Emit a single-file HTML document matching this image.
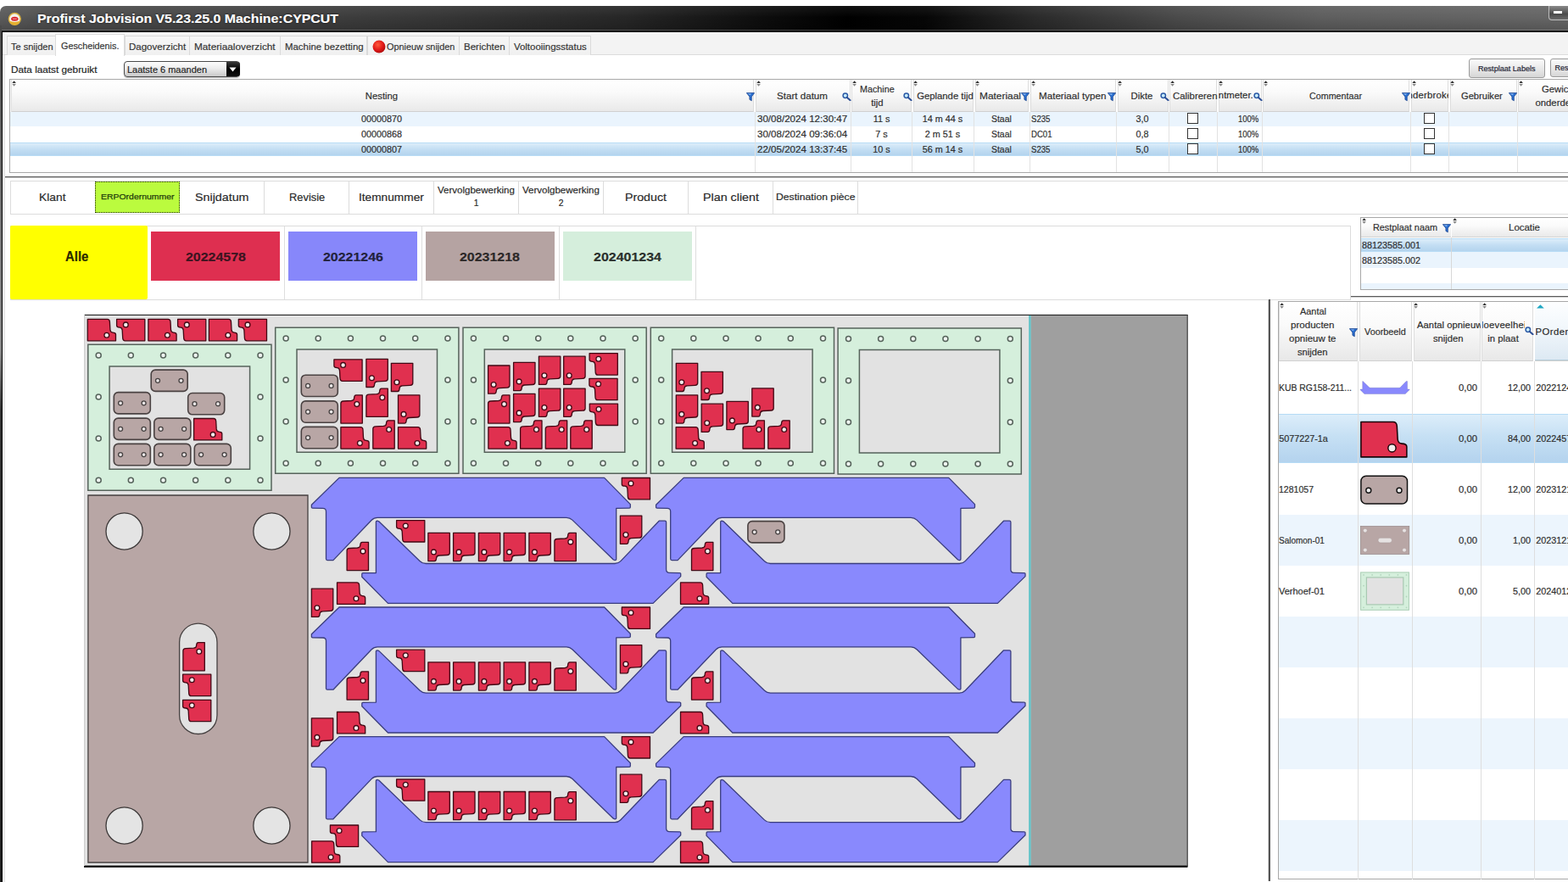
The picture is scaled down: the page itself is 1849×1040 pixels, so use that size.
<!DOCTYPE html><html><head><meta charset="utf-8"><title>Profirst Jobvision</title><style>
html,body{margin:0;padding:0}body{width:1849px;height:1040px;overflow:hidden;position:relative;background:#fff;font-family:"Liberation Sans", sans-serif;}
body>div,body>div>div{position:absolute}
.t{position:absolute;white-space:nowrap;line-height:1;color:#2a2a2a;-webkit-text-stroke:0.18px currentColor}
</style></head><body>
<svg id="nest" width="1849" height="1040" viewBox="0 0 1849 1040" style="position:absolute;left:0;top:0">
<defs>
<g id="rp"><path d="M0,0 L23.3,0 Q25.9,0 26.1,3 L26.6,12.4 Q26.9,15.6 29.6,15.7 Q33.2,15.8 33.2,18 L33.2,25.4 L0,25.4 Z" fill="#e0304f" stroke="#420814" stroke-width="1.3" stroke-linejoin="round"/><circle cx="22.5" cy="18.9" r="2.9" fill="#f3ecec" stroke="#420814" stroke-width="1.3"/></g>
<g id="bp"><rect x="0.5" y="0.5" width="43" height="25.3" rx="5" fill="#b8a6a5" stroke="#4a4242" stroke-width="1.6"/><circle cx="8.3" cy="13.2" r="2.5" fill="#e9e5e5" stroke="#454040" stroke-width="1.3"/><circle cx="35.8" cy="13.2" r="2.5" fill="#e9e5e5" stroke="#454040" stroke-width="1.3"/></g>
<g id="gf"><path fill-rule="evenodd" d="M0.6,0.6 H216.8 V172.7 H0.6 Z M25.9,26.3 V147.7 H191.4 V26.3 Z" fill="#d5efdc" stroke="#56635b" stroke-width="1.5"/><g fill="#eef4f0" stroke="#56635b" stroke-width="1.5"><circle cx="13.0" cy="13.3" r="3.0"/><circle cx="13.0" cy="62.4" r="3.0"/><circle cx="13.0" cy="111.5" r="3.0"/><circle cx="13.0" cy="160.6" r="3.0"/><circle cx="51.1" cy="13.3" r="3.0"/><circle cx="51.1" cy="160.6" r="3.0"/><circle cx="89.3" cy="13.3" r="3.0"/><circle cx="89.3" cy="160.6" r="3.0"/><circle cx="127.4" cy="13.3" r="3.0"/><circle cx="127.4" cy="160.6" r="3.0"/><circle cx="165.6" cy="13.3" r="3.0"/><circle cx="165.6" cy="160.6" r="3.0"/><circle cx="203.8" cy="13.3" r="3.0"/><circle cx="203.8" cy="62.4" r="3.0"/><circle cx="203.8" cy="111.5" r="3.0"/><circle cx="203.8" cy="160.6" r="3.0"/></g></g>
<path id="bb" d="M32.6,0 L345.2,0 L375.9,31.2 L375.9,34.6 Q375.9,35.7 374.8,35.7 L359.3,35.9 L359.3,96.2 Q359.3,97.2 357.8,97.2 L356,96.6 L307.5,49.7 Q304.6,46.9 300.6,46.9 L77.6,46.9 Q73.6,46.9 70.8,49.8 L25.5,97.2 L18.6,97.2 Q17.1,97.2 17.1,95.7 L17.1,39.8 Q17.1,36.1 13.4,36 L1.2,35.8 Q0,35.8 0,34.6 L0,31.8 Z" fill="#8989fd" stroke="#3a3d7e" stroke-width="1.3" stroke-linejoin="round"/>
</defs>
<rect x="99" y="371" width="1301.5" height="651" fill="#e2e2e2"/>
<rect x="1215.4" y="371.5" width="185.1" height="650" fill="#9f9f9f"/>
<rect x="1213.2" y="371.5" width="2.4" height="650" fill="#5cc2c8"/>
<rect x="99" y="370.9" width="1301.5" height="1.1" fill="#222"/>
<rect x="99" y="1020.6" width="1301.5" height="2.2" fill="#000"/>
<rect x="1399.6" y="371" width="1.2" height="651" fill="#444"/>
<rect x="99" y="371" width="1" height="650" fill="#cfcfcf"/>
<path fill-rule="evenodd" d="M103.9,584 H363 V1017 H103.9 Z M211.6,757.3 a22.2,22.2 0 0 1 44.4,0 V843.3 a22.2,22.2 0 0 1 -44.4,0 Z" fill="#b8a6a5" stroke="#454040" stroke-width="1.3"/>
<circle cx="146.6" cy="626.5" r="21.6" fill="#e4e4e4" stroke="#3c3838" stroke-width="1.3"/>
<circle cx="320.4" cy="626.5" r="21.6" fill="#e4e4e4" stroke="#3c3838" stroke-width="1.3"/>
<circle cx="146.6" cy="973.5" r="21.6" fill="#e4e4e4" stroke="#3c3838" stroke-width="1.3"/>
<circle cx="320.4" cy="973.5" r="21.6" fill="#e4e4e4" stroke="#3c3838" stroke-width="1.3"/>
<use href="#gf" x="103.2" y="405.6"/>
<use href="#gf" x="324.1" y="385.6"/>
<use href="#gf" x="545.4" y="385.6"/>
<use href="#gf" x="766.7" y="385.6"/>
<use href="#gf" x="987.5" y="386.3"/>
<use href="#bp" x="177.7" y="435.6"/>
<use href="#bp" x="133.8" y="462.1"/>
<use href="#bp" x="221.2" y="463"/>
<use href="#bp" x="133.8" y="492.6"/>
<use href="#bp" x="181.3" y="492.6"/>
<use href="#bp" x="133.8" y="522.9"/>
<use href="#bp" x="181.3" y="522.9"/>
<use href="#bp" x="228.8" y="522.9"/>
<use href="#bp" x="354.8" y="441.7"/>
<use href="#bp" x="354.8" y="472.4"/>
<use href="#bp" x="354.8" y="502.9"/>
<use href="#bp" x="881.4" y="614.1"/>
<use href="#bb" x="367.4" y="563.4"/>
<use href="#bb" x="773.6" y="563.4"/>
<use href="#bb" transform="translate(802.7,711.4) rotate(180)"/>
<use href="#bb" transform="translate(1209.0,711.4) rotate(180)"/>
<use href="#bb" x="367.4" y="716.0"/>
<use href="#bb" x="773.6" y="716.0"/>
<use href="#bb" transform="translate(802.7,864.0) rotate(180)"/>
<use href="#bb" transform="translate(1209.0,864.0) rotate(180)"/>
<use href="#bb" x="367.4" y="868.6"/>
<use href="#bb" x="773.6" y="868.6"/>
<use href="#bb" transform="translate(802.7,1016.6) rotate(180)"/>
<use href="#bb" transform="translate(1209.0,1016.6) rotate(180)"/>
<use href="#rp" transform="translate(103.3,376.4)"/>
<use href="#rp" transform="translate(170.8,401.8) rotate(180)"/>
<use href="#rp" transform="translate(174.9,376.4)"/>
<use href="#rp" transform="translate(242.8,401.8) rotate(180)"/>
<use href="#rp" transform="translate(246.4,376.4)"/>
<use href="#rp" transform="translate(314.5,401.8) rotate(180)"/>
<use href="#rp" transform="translate(228.6,493.5)"/>
<use href="#rp" transform="translate(427.1,449.3) rotate(180)"/>
<use href="#rp" transform="translate(457.3,423.3) rotate(90)"/>
<use href="#rp" transform="translate(486.8,428.3) rotate(90)"/>
<use href="#rp" transform="translate(401.9,499.1) rotate(-90)"/>
<use href="#rp" transform="translate(431.9,491.3) rotate(-90)"/>
<use href="#rp" transform="translate(494.9,465.9) rotate(90)"/>
<use href="#rp" transform="translate(401.9,503.7)"/>
<use href="#rp" transform="translate(439.8,529.0) rotate(-90)"/>
<use href="#rp" transform="translate(469.5,503.7)"/>
<use href="#rp" transform="translate(601.0,431.0) rotate(90)"/>
<use href="#rp" transform="translate(631.0,427.4) rotate(90)"/>
<use href="#rp" transform="translate(660.8,420.2) rotate(90)"/>
<use href="#rp" transform="translate(690.1,420.2) rotate(90)"/>
<use href="#rp" transform="translate(728.3,442.1) rotate(180)"/>
<use href="#rp" transform="translate(728.1,471.7) rotate(180)"/>
<use href="#rp" transform="translate(728.5,501.5) rotate(180)"/>
<use href="#rp" transform="translate(575.6,499.1) rotate(-90)"/>
<use href="#rp" transform="translate(631.0,464.4) rotate(90)"/>
<use href="#rp" transform="translate(660.8,458.1) rotate(90)"/>
<use href="#rp" transform="translate(690.1,458.1) rotate(90)"/>
<use href="#rp" transform="translate(575.9,503.7)"/>
<use href="#rp" transform="translate(613.6,529.0) rotate(-90)"/>
<use href="#rp" transform="translate(643.3,529.0) rotate(-90)"/>
<use href="#rp" transform="translate(672.8,529.0) rotate(-90)"/>
<use href="#rp" transform="translate(822.7,428.3) rotate(90)"/>
<use href="#rp" transform="translate(852.4,438.3) rotate(90)"/>
<use href="#rp" transform="translate(822.7,465.9) rotate(90)"/>
<use href="#rp" transform="translate(852.6,476.2) rotate(90)"/>
<use href="#rp" transform="translate(882.3,473.4) rotate(90)"/>
<use href="#rp" transform="translate(912.2,457.9) rotate(90)"/>
<use href="#rp" transform="translate(797.1,503.7)"/>
<use href="#rp" transform="translate(876.0,529.0) rotate(-90)"/>
<use href="#rp" transform="translate(905.8,529.0) rotate(-90)"/>
<use href="#rp" transform="translate(215.9,790.8) rotate(-90)"/>
<use href="#rp" transform="translate(248.8,820.6) rotate(180)"/>
<use href="#rp" transform="translate(248.8,850.7) rotate(180)"/>
<use href="#rp" transform="translate(500.8,639.0) rotate(180)"/>
<use href="#rp" transform="translate(530.3,628.4) rotate(90)"/>
<use href="#rp" transform="translate(560.0,628.4) rotate(90)"/>
<use href="#rp" transform="translate(589.8,628.4) rotate(90)"/>
<use href="#rp" transform="translate(619.5,628.4) rotate(90)"/>
<use href="#rp" transform="translate(649.3,628.4) rotate(90)"/>
<use href="#rp" transform="translate(653.9,661.6) rotate(-90)"/>
<use href="#rp" transform="translate(766.5,588.9) rotate(180)"/>
<use href="#rp" transform="translate(756.8,608.1) rotate(90)"/>
<use href="#rp" transform="translate(409.1,672.6) rotate(-90)"/>
<use href="#rp" transform="translate(397.5,686.9)"/>
<use href="#rp" transform="translate(392.8,694.2) rotate(90)"/>
<use href="#rp" transform="translate(815.5,672.6) rotate(-90)"/>
<use href="#rp" transform="translate(802.5,686.9)"/>
<use href="#rp" transform="translate(500.8,791.6) rotate(180)"/>
<use href="#rp" transform="translate(530.3,780.9) rotate(90)"/>
<use href="#rp" transform="translate(560.0,780.9) rotate(90)"/>
<use href="#rp" transform="translate(589.8,780.9) rotate(90)"/>
<use href="#rp" transform="translate(619.5,780.9) rotate(90)"/>
<use href="#rp" transform="translate(649.3,780.9) rotate(90)"/>
<use href="#rp" transform="translate(653.9,814.1) rotate(-90)"/>
<use href="#rp" transform="translate(766.5,741.4) rotate(180)"/>
<use href="#rp" transform="translate(756.8,760.6) rotate(90)"/>
<use href="#rp" transform="translate(409.1,825.1) rotate(-90)"/>
<use href="#rp" transform="translate(397.5,839.5)"/>
<use href="#rp" transform="translate(392.8,846.9) rotate(90)"/>
<use href="#rp" transform="translate(815.5,825.1) rotate(-90)"/>
<use href="#rp" transform="translate(802.5,839.5)"/>
<use href="#rp" transform="translate(500.8,944.2) rotate(180)"/>
<use href="#rp" transform="translate(530.3,933.5) rotate(90)"/>
<use href="#rp" transform="translate(560.0,933.5) rotate(90)"/>
<use href="#rp" transform="translate(589.8,933.5) rotate(90)"/>
<use href="#rp" transform="translate(619.5,933.5) rotate(90)"/>
<use href="#rp" transform="translate(649.3,933.5) rotate(90)"/>
<use href="#rp" transform="translate(653.9,966.8) rotate(-90)"/>
<use href="#rp" transform="translate(766.5,894.0) rotate(180)"/>
<use href="#rp" transform="translate(756.8,913.2) rotate(90)"/>
<use href="#rp" transform="translate(422.6,998.4) rotate(180)"/>
<use href="#rp" transform="translate(367.6,991.8)"/>
<use href="#rp" transform="translate(815.5,977.8) rotate(-90)"/>
<use href="#rp" transform="translate(802.5,992.1)"/>
</svg>
<div style="left:0px;top:7px;width:1849px;height:30px;background:linear-gradient(97deg,#5c5c5c 0%,#505050 3%,#474747 12%,#363636 28%,#262626 40%,#0c0c0c 49%,#000 54%,#060606 59%,#2a2a2a 66%,#4a4a4a 75%,#5e5e5e 84%,#666 100%);border-top-left-radius:7px"></div>
<div style="left:0px;top:7px;width:1849px;height:30px;background:linear-gradient(180deg,rgba(255,255,255,0.07) 0,rgba(255,255,255,0) 45%,rgba(0,0,0,0.18) 100%);border-top-left-radius:7px"></div>
<div style="left:0px;top:35.4px;width:1849px;height:1px;background:rgba(255,255,255,0.22)"></div>
<div style="left:0px;top:36.4px;width:1849px;height:1.4px;background:#0a0a0a"></div>
<div style="left:0px;top:30px;width:1.8px;height:1010px;background:linear-gradient(180deg,#4a4a4a 0,#777 25%,#888 38%,#333 45%,#222 100%)"></div>
<div style="left:1.7px;top:37px;width:1.2px;height:1003px;background:#000"></div>
<div style="left:5px;top:38px;width:1px;height:1002px;background:#e4e4e4"></div>
<svg style="position:absolute;left:8px;top:13px" width="19" height="19" viewBox="0 0 19 19"><circle cx="9.3" cy="9.3" r="6.9" fill="#f6f2ea" stroke="#d8b040" stroke-width="1.5"/><path d="M3,11.8 A6.6,6.6 0 0 0 15.6,11.8 Q9.3,14 3,11.8Z" fill="#e6b030"/><ellipse cx="9.3" cy="9.2" rx="4.2" ry="2.5" fill="#d8202a"/><rect x="6.8" y="8.7" width="5" height="1" fill="#f8b0b0"/></svg>
<div style="left:1826px;top:7px;width:30px;height:16.5px;border:1px solid #bdbdbd;border-top:none;border-bottom-left-radius:4px;background:linear-gradient(180deg,#8a8a8a,#4a4a4a 60%,#6a6a6a);box-sizing:border-box"></div>
<div style="left:1832px;top:13px;width:10px;height:3px;background:#fff"></div>
<div style="left:3px;top:38px;width:1846px;height:26.5px;background:#f3f3f3"></div>
<div style="left:3px;top:64.3px;width:1846px;height:1px;background:#dcdcdc"></div>
<div style="left:7.6px;top:42px;width:58.6px;height:22.5px;box-sizing:border-box;border:1px solid #dadada;border-bottom:none;background:linear-gradient(180deg,#f6f6f6,#f0f0f0)"></div>
<div style="left:147.4px;top:42px;width:77.0px;height:22.5px;box-sizing:border-box;border:1px solid #dadada;border-bottom:none;background:linear-gradient(180deg,#f6f6f6,#f0f0f0)"></div>
<div style="left:223.4px;top:42px;width:107.29999999999998px;height:22.5px;box-sizing:border-box;border:1px solid #dadada;border-bottom:none;background:linear-gradient(180deg,#f6f6f6,#f0f0f0)"></div>
<div style="left:329.7px;top:42px;width:103.80000000000001px;height:22.5px;box-sizing:border-box;border:1px solid #dadada;border-bottom:none;background:linear-gradient(180deg,#f6f6f6,#f0f0f0)"></div>
<div style="left:432.5px;top:42px;width:109.20000000000005px;height:22.5px;box-sizing:border-box;border:1px solid #dadada;border-bottom:none;background:linear-gradient(180deg,#f6f6f6,#f0f0f0)"></div>
<div style="left:540.7px;top:42px;width:60.0px;height:22.5px;box-sizing:border-box;border:1px solid #dadada;border-bottom:none;background:linear-gradient(180deg,#f6f6f6,#f0f0f0)"></div>
<div style="left:599.7px;top:42px;width:97.09999999999991px;height:22.5px;box-sizing:border-box;border:1px solid #dadada;border-bottom:none;background:linear-gradient(180deg,#f6f6f6,#f0f0f0)"></div>
<div style="left:65.2px;top:40px;width:82.2px;height:25.5px;box-sizing:border-box;border:1px solid #dcdcdc;border-bottom:none;background:#fff"></div>
<svg style="position:absolute;left:438.6px;top:47px" width="16" height="16"><defs><radialGradient id="rb" cx="0.4" cy="0.35" r="0.7"><stop offset="0" stop-color="#ff5a3c"/><stop offset="0.6" stop-color="#e01818"/><stop offset="1" stop-color="#a80c0c"/></radialGradient></defs><circle cx="8" cy="8" r="7.5" fill="url(#rb)"/></svg>
<div style="left:146px;top:72.4px;width:137px;height:18.2px;box-sizing:border-box;border:1px solid #4a4a4a;border-radius:4px;background:linear-gradient(180deg,#fdfdfd 0,#ececec 45%,#c9c9c9 100%);box-shadow:0 1px 1px rgba(0,0,0,.25)"></div>
<div style="left:267.4px;top:73px;width:15.2px;height:17px;background:linear-gradient(180deg,#3a3a3a,#000 50%,#111);border-radius:0 3px 3px 0"></div>
<svg style="position:absolute;left:270px;top:78.5px" width="9" height="6"><path d="M0.5,0.5H8.5L4.5,5.5Z" fill="#fff"/></svg>
<div style="left:1732.3px;top:69.4px;width:89.5px;height:22.7px;box-sizing:border-box;border:1px solid #9a9a9a;border-radius:3px;background:linear-gradient(180deg,#fbfbfb,#e6e6e6 60%,#d6d6d6)"></div>
<div style="left:1828.4px;top:68.6px;width:40px;height:22.6px;box-sizing:border-box;border:1px solid #9a9a9a;border-radius:3px;background:linear-gradient(180deg,#fbfbfb,#e6e6e6 60%,#d6d6d6)"></div>
<div style="left:11.4px;top:93.2px;width:1839.6px;height:110.99999999999999px;box-sizing:border-box;border:1px solid #a8a8a8;background:#fff"></div>
<div style="left:12.4px;top:132px;width:1840px;height:17px;background:#eaf4fd"></div>
<div style="left:12.4px;top:167.6px;width:1840px;height:16.6px;box-sizing:border-box;background:linear-gradient(180deg,#dcedfa 0,#c3def3 50%,#b4d4ee 100%);border-top:1px solid #b8dcf5;border-bottom:1px solid #b8dcf5"></div>
<div style="left:13.200000000000001px;top:94.2px;width:876.3000000000001px;height:37.6px;box-sizing:border-box;border:1px solid #dddddd;border-top:none;border-bottom-color:#d0d0d0;background:linear-gradient(180deg,#fff 0,#fafafa 40%,#e9e9e9 100%)"></div>
<svg style="position:absolute;left:13.6px;top:95px" width="6" height="8"><path d="M2.6,0.2L4.9,2.9H0.3Z" fill="#2e2e2e"/><path d="M0.3,4.1H4.9L2.6,6.7Z" fill="#858585"/></svg>
<div style="left:891.3px;top:94.2px;width:111.30000000000003px;height:37.6px;box-sizing:border-box;border:1px solid #dddddd;border-top:none;border-bottom-color:#d0d0d0;background:linear-gradient(180deg,#fff 0,#fafafa 40%,#e9e9e9 100%)"></div>
<svg style="position:absolute;left:891.7px;top:95px" width="6" height="8"><path d="M2.6,0.2L4.9,2.9H0.3Z" fill="#2e2e2e"/><path d="M0.3,4.1H4.9L2.6,6.7Z" fill="#858585"/></svg>
<div style="left:1004.4px;top:94.2px;width:70.39999999999993px;height:37.6px;box-sizing:border-box;border:1px solid #dddddd;border-top:none;border-bottom-color:#d0d0d0;background:linear-gradient(180deg,#fff 0,#fafafa 40%,#e9e9e9 100%)"></div>
<svg style="position:absolute;left:1004.8000000000001px;top:95px" width="6" height="8"><path d="M2.6,0.2L4.9,2.9H0.3Z" fill="#2e2e2e"/><path d="M0.3,4.1H4.9L2.6,6.7Z" fill="#858585"/></svg>
<div style="left:1076.6px;top:94.2px;width:71.2px;height:37.6px;box-sizing:border-box;border:1px solid #dddddd;border-top:none;border-bottom-color:#d0d0d0;background:linear-gradient(180deg,#fff 0,#fafafa 40%,#e9e9e9 100%)"></div>
<svg style="position:absolute;left:1077.0px;top:95px" width="6" height="8"><path d="M2.6,0.2L4.9,2.9H0.3Z" fill="#2e2e2e"/><path d="M0.3,4.1H4.9L2.6,6.7Z" fill="#858585"/></svg>
<div style="left:1149.6px;top:94.2px;width:63.90000000000005px;height:37.6px;box-sizing:border-box;border:1px solid #dddddd;border-top:none;border-bottom-color:#d0d0d0;background:linear-gradient(180deg,#fff 0,#fafafa 40%,#e9e9e9 100%)"></div>
<svg style="position:absolute;left:1150.0px;top:95px" width="6" height="8"><path d="M2.6,0.2L4.9,2.9H0.3Z" fill="#2e2e2e"/><path d="M0.3,4.1H4.9L2.6,6.7Z" fill="#858585"/></svg>
<div style="left:1215.3px;top:94.2px;width:100.49999999999996px;height:37.6px;box-sizing:border-box;border:1px solid #dddddd;border-top:none;border-bottom-color:#d0d0d0;background:linear-gradient(180deg,#fff 0,#fafafa 40%,#e9e9e9 100%)"></div>
<svg style="position:absolute;left:1215.7px;top:95px" width="6" height="8"><path d="M2.6,0.2L4.9,2.9H0.3Z" fill="#2e2e2e"/><path d="M0.3,4.1H4.9L2.6,6.7Z" fill="#858585"/></svg>
<div style="left:1317.6px;top:94.2px;width:59.99999999999996px;height:37.6px;box-sizing:border-box;border:1px solid #dddddd;border-top:none;border-bottom-color:#d0d0d0;background:linear-gradient(180deg,#fff 0,#fafafa 40%,#e9e9e9 100%)"></div>
<svg style="position:absolute;left:1318.0px;top:95px" width="6" height="8"><path d="M2.6,0.2L4.9,2.9H0.3Z" fill="#2e2e2e"/><path d="M0.3,4.1H4.9L2.6,6.7Z" fill="#858585"/></svg>
<div style="left:1379.3999999999999px;top:94.2px;width:55.30000000000014px;height:37.6px;box-sizing:border-box;border:1px solid #dddddd;border-top:none;border-bottom-color:#d0d0d0;background:linear-gradient(180deg,#fff 0,#fafafa 40%,#e9e9e9 100%)"></div>
<svg style="position:absolute;left:1379.8px;top:95px" width="6" height="8"><path d="M2.6,0.2L4.9,2.9H0.3Z" fill="#2e2e2e"/><path d="M0.3,4.1H4.9L2.6,6.7Z" fill="#858585"/></svg>
<div style="left:1436.5px;top:94.2px;width:51.099999999999866px;height:37.6px;box-sizing:border-box;border:1px solid #dddddd;border-top:none;border-bottom-color:#d0d0d0;background:linear-gradient(180deg,#fff 0,#fafafa 40%,#e9e9e9 100%)"></div>
<svg style="position:absolute;left:1436.9px;top:95px" width="6" height="8"><path d="M2.6,0.2L4.9,2.9H0.3Z" fill="#2e2e2e"/><path d="M0.3,4.1H4.9L2.6,6.7Z" fill="#858585"/></svg>
<div style="left:1489.3999999999999px;top:94.2px;width:173.00000000000017px;height:37.6px;box-sizing:border-box;border:1px solid #dddddd;border-top:none;border-bottom-color:#d0d0d0;background:linear-gradient(180deg,#fff 0,#fafafa 40%,#e9e9e9 100%)"></div>
<svg style="position:absolute;left:1489.8px;top:95px" width="6" height="8"><path d="M2.6,0.2L4.9,2.9H0.3Z" fill="#2e2e2e"/><path d="M0.3,4.1H4.9L2.6,6.7Z" fill="#858585"/></svg>
<div style="left:1664.2px;top:94.2px;width:43.49999999999996px;height:37.6px;box-sizing:border-box;border:1px solid #dddddd;border-top:none;border-bottom-color:#d0d0d0;background:linear-gradient(180deg,#fff 0,#fafafa 40%,#e9e9e9 100%)"></div>
<svg style="position:absolute;left:1664.6000000000001px;top:95px" width="6" height="8"><path d="M2.6,0.2L4.9,2.9H0.3Z" fill="#2e2e2e"/><path d="M0.3,4.1H4.9L2.6,6.7Z" fill="#858585"/></svg>
<div style="left:1709.5px;top:94.2px;width:79.09999999999987px;height:37.6px;box-sizing:border-box;border:1px solid #dddddd;border-top:none;border-bottom-color:#d0d0d0;background:linear-gradient(180deg,#fff 0,#fafafa 40%,#e9e9e9 100%)"></div>
<svg style="position:absolute;left:1709.9px;top:95px" width="6" height="8"><path d="M2.6,0.2L4.9,2.9H0.3Z" fill="#2e2e2e"/><path d="M0.3,4.1H4.9L2.6,6.7Z" fill="#858585"/></svg>
<div style="left:1790.3999999999999px;top:94.2px;width:68.6000000000001px;height:37.6px;box-sizing:border-box;border:1px solid #dddddd;border-top:none;border-bottom-color:#d0d0d0;background:linear-gradient(180deg,#fff 0,#fafafa 40%,#e9e9e9 100%)"></div>
<svg style="position:absolute;left:1790.8px;top:95px" width="6" height="8"><path d="M2.6,0.2L4.9,2.9H0.3Z" fill="#2e2e2e"/><path d="M0.3,4.1H4.9L2.6,6.7Z" fill="#858585"/></svg>
<div style="left:890.0px;top:132px;width:1px;height:71.19999999999999px;background:#e2e2e2"></div>
<div style="left:1003.1px;top:132px;width:1px;height:71.19999999999999px;background:#e2e2e2"></div>
<div style="left:1075.3px;top:132px;width:1px;height:71.19999999999999px;background:#e2e2e2"></div>
<div style="left:1148.3px;top:132px;width:1px;height:71.19999999999999px;background:#e2e2e2"></div>
<div style="left:1214.0px;top:132px;width:1px;height:71.19999999999999px;background:#e2e2e2"></div>
<div style="left:1316.3px;top:132px;width:1px;height:71.19999999999999px;background:#e2e2e2"></div>
<div style="left:1378.1px;top:132px;width:1px;height:71.19999999999999px;background:#e2e2e2"></div>
<div style="left:1435.2px;top:132px;width:1px;height:71.19999999999999px;background:#e2e2e2"></div>
<div style="left:1488.1px;top:132px;width:1px;height:71.19999999999999px;background:#e2e2e2"></div>
<div style="left:1662.9px;top:132px;width:1px;height:71.19999999999999px;background:#e2e2e2"></div>
<div style="left:1708.2px;top:132px;width:1px;height:71.19999999999999px;background:#e2e2e2"></div>
<div style="left:1789.1px;top:132px;width:1px;height:71.19999999999999px;background:#e2e2e2"></div>
<svg style="position:absolute;left:879.8px;top:108.6px" width="10" height="11"><path d="M0.3,0.6H9.7L6.3,5V9.8L3.9,8.4V5Z" fill="#2a6fd0" stroke="#153e86" stroke-width="0.7"/><path d="M1.6,1.4H6L4.6,3Z" fill="#9cc4f4"/></svg>
<svg style="position:absolute;left:992.6px;top:108.5px" width="11" height="10"><circle cx="3.8" cy="3.8" r="2.7" fill="#c8ecfa" stroke="#2c5aa6" stroke-width="1.5"/><path d="M5.9,5.9L9.6,9.2" stroke="#2c4f96" stroke-width="2" stroke-linecap="round"/></svg>
<svg style="position:absolute;left:1065px;top:108.5px" width="11" height="10"><circle cx="3.8" cy="3.8" r="2.7" fill="#c8ecfa" stroke="#2c5aa6" stroke-width="1.5"/><path d="M5.9,5.9L9.6,9.2" stroke="#2c4f96" stroke-width="2" stroke-linecap="round"/></svg>
<svg style="position:absolute;left:1204px;top:108.6px" width="10" height="11"><path d="M0.3,0.6H9.7L6.3,5V9.8L3.9,8.4V5Z" fill="#2a6fd0" stroke="#153e86" stroke-width="0.7"/><path d="M1.6,1.4H6L4.6,3Z" fill="#9cc4f4"/></svg>
<svg style="position:absolute;left:1306px;top:108.6px" width="10" height="11"><path d="M0.3,0.6H9.7L6.3,5V9.8L3.9,8.4V5Z" fill="#2a6fd0" stroke="#153e86" stroke-width="0.7"/><path d="M1.6,1.4H6L4.6,3Z" fill="#9cc4f4"/></svg>
<svg style="position:absolute;left:1367.6px;top:108.5px" width="11" height="10"><circle cx="3.8" cy="3.8" r="2.7" fill="#c8ecfa" stroke="#2c5aa6" stroke-width="1.5"/><path d="M5.9,5.9L9.6,9.2" stroke="#2c4f96" stroke-width="2" stroke-linecap="round"/></svg>
<div style="left:1436.7px;top:100px;width:40px;height:24px;overflow:hidden"><span class="t" style="right:-1px;top:7.3px;font-size:11.3px">Ontmeter.</span></div>
<svg style="position:absolute;left:1477.6px;top:108.5px" width="11" height="10"><circle cx="3.8" cy="3.8" r="2.7" fill="#c8ecfa" stroke="#2c5aa6" stroke-width="1.5"/><path d="M5.9,5.9L9.6,9.2" stroke="#2c4f96" stroke-width="2" stroke-linecap="round"/></svg>
<svg style="position:absolute;left:1652.6px;top:108.6px" width="10" height="11"><path d="M0.3,0.6H9.7L6.3,5V9.8L3.9,8.4V5Z" fill="#2a6fd0" stroke="#153e86" stroke-width="0.7"/><path d="M1.6,1.4H6L4.6,3Z" fill="#9cc4f4"/></svg>
<div style="left:1664.4px;top:100px;width:43.3px;height:24px;overflow:hidden"><span class="t" style="left:-14px;top:7.3px;font-size:11.3px;letter-spacing:0.25px">Onderbroken</span></div>
<svg style="position:absolute;left:1778.6px;top:108.6px" width="10" height="11"><path d="M0.3,0.6H9.7L6.3,5V9.8L3.9,8.4V5Z" fill="#2a6fd0" stroke="#153e86" stroke-width="0.7"/><path d="M1.6,1.4H6L4.6,3Z" fill="#9cc4f4"/></svg>
<div style="left:1400.0px;top:133.2px;width:13px;height:13px;box-sizing:border-box;border:1px solid #333;background:#fff"></div>
<div style="left:1679.0px;top:133.2px;width:13px;height:13px;box-sizing:border-box;border:1px solid #333;background:#fff"></div>
<div style="left:1400.0px;top:151.3px;width:13px;height:13px;box-sizing:border-box;border:1px solid #333;background:#fff"></div>
<div style="left:1679.0px;top:151.3px;width:13px;height:13px;box-sizing:border-box;border:1px solid #333;background:#fff"></div>
<div style="left:1400.0px;top:169.2px;width:13px;height:13px;box-sizing:border-box;border:1px solid #333;background:#fff"></div>
<div style="left:1679.0px;top:169.2px;width:13px;height:13px;box-sizing:border-box;border:1px solid #333;background:#fff"></div>
<div style="left:5.5px;top:207.8px;width:1844px;height:1.6px;background:#5a5a5a"></div>
<div style="left:5.5px;top:209.4px;width:1844px;height:1px;background:#c8c8c8"></div>
<div style="left:11.8px;top:213px;width:1840px;height:39.6px;box-sizing:border-box;border:1px solid #dcdcdc;background:#fff"></div>
<div style="left:310.9px;top:214px;width:1px;height:37.6px;background:#dcdcdc"></div>
<div style="left:410.9px;top:214px;width:1px;height:37.6px;background:#dcdcdc"></div>
<div style="left:510.9px;top:214px;width:1px;height:37.6px;background:#dcdcdc"></div>
<div style="left:610.9px;top:214px;width:1px;height:37.6px;background:#dcdcdc"></div>
<div style="left:710.9px;top:214px;width:1px;height:37.6px;background:#dcdcdc"></div>
<div style="left:810.9px;top:214px;width:1px;height:37.6px;background:#dcdcdc"></div>
<div style="left:910.9px;top:214px;width:1px;height:37.6px;background:#dcdcdc"></div>
<div style="left:1010.9px;top:214px;width:1px;height:37.6px;background:#dcdcdc"></div>
<div style="left:112.2px;top:214.2px;width:99.8px;height:36.8px;box-sizing:border-box;border:1px dotted #1c2a00;background:#bbfb3e"></div>
<div style="left:11.8px;top:266.2px;width:1581.2px;height:87.4px;box-sizing:border-box;border:1px solid #dcdcdc;background:#fff"></div>
<div style="left:335.0px;top:267px;width:1px;height:86px;background:#dedede"></div>
<div style="left:496.7px;top:267px;width:1px;height:86px;background:#dedede"></div>
<div style="left:658.5px;top:267px;width:1px;height:86px;background:#dedede"></div>
<div style="left:820.2px;top:267px;width:1px;height:86px;background:#dedede"></div>
<div style="left:11.8px;top:266.2px;width:161.8px;height:87.2px;background:#ffff00;border-radius:2px"></div>
<div style="left:178px;top:273px;width:152px;height:57.6px;background:#de2f50"></div>
<div style="left:340px;top:273px;width:152px;height:57.6px;background:#8787fa"></div>
<div style="left:501.5px;top:273px;width:152px;height:57.6px;background:#b5a3a2"></div>
<div style="left:663.5px;top:273px;width:152px;height:57.6px;background:#d5eedc"></div>
<div style="left:1604.3px;top:255.6px;width:260px;height:86.4px;box-sizing:border-box;border:1px solid #a8a8a8;background:#fff"></div>
<div style="left:1605.3px;top:256.6px;width:105.4px;height:22px;background:linear-gradient(180deg,#fff 0,#fbfbfb 40%,#e9e9e9 100%);box-shadow:0 1px 0 #d4d4d4"></div>
<div style="left:1712px;top:256.6px;width:140px;height:22px;background:linear-gradient(180deg,#fff 0,#fbfbfb 40%,#e9e9e9 100%);box-shadow:0 1px 0 #d4d4d4"></div>
<svg style="position:absolute;left:1606px;top:257.2px" width="6" height="8"><path d="M2.6,0.2L4.9,2.9H0.3Z" fill="#2e2e2e"/><path d="M0.3,4.1H4.9L2.6,6.7Z" fill="#858585"/></svg>
<svg style="position:absolute;left:1712.6px;top:257.2px" width="6" height="8"><path d="M2.6,0.2L4.9,2.9H0.3Z" fill="#2e2e2e"/><path d="M0.3,4.1H4.9L2.6,6.7Z" fill="#858585"/></svg>
<div style="left:1605.3px;top:281px;width:250px;height:16.2px;box-sizing:border-box;background:linear-gradient(180deg,#dcedfa 0,#c3def3 50%,#b4d4ee 100%);border-top:1px solid #b8dcf5;border-bottom:1px solid #b8dcf5"></div>
<div style="left:1605.3px;top:297.2px;width:250px;height:18.4px;background:#eaf4fd"></div>
<div style="left:1605.3px;top:333.8px;width:250px;height:7.2px;background:#eaf4fd"></div>
<div style="left:1710.8px;top:280px;width:1px;height:61px;background:#d8d8d8"></div>
<svg style="position:absolute;left:1700.6px;top:263.5px" width="10" height="11"><path d="M0.3,0.6H9.7L6.3,5V9.8L3.9,8.4V5Z" fill="#2a6fd0" stroke="#153e86" stroke-width="0.7"/><path d="M1.6,1.4H6L4.6,3Z" fill="#9cc4f4"/></svg>
<div style="left:1592.6px;top:348.6px;width:257px;height:1.7px;background:#5a5a5a"></div>
<div style="left:1592.6px;top:350.3px;width:257px;height:1px;background:#cfcfcf"></div>
<div style="left:1496px;top:353.4px;width:2.2px;height:686px;background:#555"></div>
<div style="left:1494.6px;top:353.4px;width:1.2px;height:686px;background:#d0d0d0"></div>
<div style="left:1506.6px;top:355.2px;width:360px;height:682.3px;box-sizing:border-box;border:1px solid #a8a8a8;background:#fff"></div>
<div style="left:1507.6px;top:488.0px;width:345px;height:58.29999999999993px;box-sizing:border-box;background:linear-gradient(180deg,#dcedfa 0,#c6e0f4 45%,#b4d3ee 100%);border-top:1px solid #b5dbf5;border-bottom:1px solid #b5dbf5"></div>
<div style="left:1507.6px;top:606.5px;width:345px;height:60.299999999999955px;background:#ecf5fd"></div>
<div style="left:1507.6px;top:726.9px;width:345px;height:59.700000000000045px;background:#ecf5fd"></div>
<div style="left:1507.6px;top:846.9px;width:345px;height:59.89999999999998px;background:#ecf5fd"></div>
<div style="left:1507.6px;top:966.9px;width:345px;height:60.10000000000002px;background:#ecf5fd"></div>
<div style="left:1508.3999999999999px;top:356.2px;width:92.30000000000014px;height:69.4px;box-sizing:border-box;border:1px solid #dddddd;border-top:none;border-bottom-color:#d0d0d0;background:linear-gradient(180deg,#fff 0,#fafafa 40%,#e8e8e8 100%)"></div>
<svg style="position:absolute;left:1508.8px;top:357px" width="6" height="8"><path d="M2.6,0.2L4.9,2.9H0.3Z" fill="#2e2e2e"/><path d="M0.3,4.1H4.9L2.6,6.7Z" fill="#858585"/></svg>
<div style="left:1602.5px;top:356.2px;width:62.2px;height:69.4px;box-sizing:border-box;border:1px solid #dddddd;border-top:none;border-bottom-color:#d0d0d0;background:linear-gradient(180deg,#fff 0,#fafafa 40%,#e8e8e8 100%)"></div>
<div style="left:1666.5px;top:356.2px;width:79.09999999999987px;height:69.4px;box-sizing:border-box;border:1px solid #dddddd;border-top:none;border-bottom-color:#d0d0d0;background:linear-gradient(180deg,#fff 0,#fafafa 40%,#e8e8e8 100%)"></div>
<svg style="position:absolute;left:1666.9px;top:357px" width="6" height="8"><path d="M2.6,0.2L4.9,2.9H0.3Z" fill="#2e2e2e"/><path d="M0.3,4.1H4.9L2.6,6.7Z" fill="#858585"/></svg>
<div style="left:1747.3999999999999px;top:356.2px;width:61.000000000000185px;height:69.4px;box-sizing:border-box;border:1px solid #dddddd;border-top:none;border-bottom-color:#d0d0d0;background:linear-gradient(180deg,#fff 0,#fafafa 40%,#e8e8e8 100%)"></div>
<svg style="position:absolute;left:1747.8px;top:357px" width="6" height="8"><path d="M2.6,0.2L4.9,2.9H0.3Z" fill="#2e2e2e"/><path d="M0.3,4.1H4.9L2.6,6.7Z" fill="#858585"/></svg>
<div style="left:1810.2px;top:356.2px;width:48.79999999999991px;height:69.4px;box-sizing:border-box;border:1px solid #dddddd;border-top:none;border-bottom-color:#d0d0d0;background:linear-gradient(180deg,#fff 0,#fafafa 40%,#e8e8e8 100%)"></div>
<div style="left:1601.2px;top:426px;width:1px;height:610.5px;background:#dedede"></div>
<div style="left:1665.2px;top:426px;width:1px;height:610.5px;background:#dedede"></div>
<div style="left:1746.1px;top:426px;width:1px;height:610.5px;background:#dedede"></div>
<div style="left:1808.9px;top:426px;width:1px;height:610.5px;background:#dedede"></div>
<div style="left:1810.4px;top:356.2px;width:42px;height:67.4px;background:linear-gradient(180deg,#fdfeff 0,#f3f8fc 40%,#dde9f3 100%)"></div>
<div style="left:1810.4px;top:423.6px;width:42px;height:1.6px;background:#b7cfdc"></div>
<svg style="position:absolute;left:1812.4px;top:359.2px" width="9" height="5"><path d="M0,4.6L4.4,0.2L8.8,4.6Z" fill="#1ea6c2"/></svg>
<svg style="position:absolute;left:1590.8px;top:387px" width="10" height="11"><path d="M0.3,0.6H9.7L6.3,5V9.8L3.9,8.4V5Z" fill="#2a6fd0" stroke="#153e86" stroke-width="0.7"/><path d="M1.6,1.4H6L4.6,3Z" fill="#9cc4f4"/></svg>
<div style="left:1666.7px;top:372px;width:79.4px;height:40px;overflow:hidden"><span class="t" style="left:4.4px;top:6px;font-size:11.2px;letter-spacing:0.05px">Aantal opnieuw te</span></div>
<div style="left:1747.6px;top:372px;width:50px;height:24px;overflow:hidden"><span class="t" style="left:-6.4px;top:6px;font-size:11.3px;letter-spacing:0.2px">Hoeveelheid</span></div>
<svg style="position:absolute;left:1798.4px;top:384.8px" width="11" height="10"><circle cx="3.8" cy="3.8" r="2.7" fill="#c8ecfa" stroke="#2c5aa6" stroke-width="1.5"/><path d="M5.9,5.9L9.6,9.2" stroke="#2c4f96" stroke-width="2" stroke-linecap="round"/></svg>
<div style="left:1810.6px;top:380px;width:40px;height:24px;overflow:hidden"><span class="t" style="left:-16.6px;top:6px;font-size:11.3px;letter-spacing:0.45px">ERPOrdernummer</span></div>
<svg style="position:absolute;left:0;top:0" width="1849" height="1040" viewBox="0 0 1849 1040"><use href="#bb" transform="translate(1662.2,464.5) rotate(180) scale(0.1545)" style="stroke-width:3"/><g transform="translate(1604.9,497.6) scale(1.625)"><path d="M0,0 L23.3,0 Q25.9,0 26.1,3 L26.6,12.4 Q26.9,15.6 29.6,15.7 Q33.2,15.8 33.2,18 L33.2,25.4 L0,25.4 Z" fill="#e0304f" stroke="#1a0408" stroke-width="0.95" stroke-linejoin="round"/><circle cx="22.5" cy="18.9" r="2.85" fill="#f3eeee" stroke="#1a0408" stroke-width="0.9"/></g><rect x="1604.9" y="561.2" width="54.6" height="32.8" rx="6" fill="#b8a6a5" stroke="#111" stroke-width="1.5"/><circle cx="1613.8" cy="578.3" r="3" fill="#eee" stroke="#111" stroke-width="1.4"/><circle cx="1650" cy="578.3" r="3" fill="#eee" stroke="#111" stroke-width="1.4"/><rect x="1604.4" y="620.6" width="57.3" height="32.8" fill="#b8a6a5" stroke="#9c8d8c" stroke-width="0.8"/><g fill="#e6e2e2" stroke="#a59594" stroke-width="0.5"><circle cx="1609.8" cy="625.6" r="2.4"/><circle cx="1656" cy="625.6" r="2.4"/><circle cx="1609.8" cy="648.6" r="2.4"/><circle cx="1656" cy="648.6" r="2.4"/><rect x="1625" y="634.3" width="16.4" height="5.6" rx="2.8"/></g><rect x="1604.6" y="674.9" width="56.8" height="44.4" fill="#d5efdc" stroke="#a9cdb4" stroke-width="1"/><rect x="1611.4" y="680.9" width="43.4" height="32" fill="#e2e2e2" stroke="#a9c9b2" stroke-width="1.2"/><g fill="#b4d6be"><circle cx="1608.0" cy="677.9" r="0.9"/><circle cx="1608.0" cy="716.3" r="0.9"/><circle cx="1618.1" cy="677.9" r="0.9"/><circle cx="1618.1" cy="716.3" r="0.9"/><circle cx="1628.2" cy="677.9" r="0.9"/><circle cx="1628.2" cy="716.3" r="0.9"/><circle cx="1638.3" cy="677.9" r="0.9"/><circle cx="1638.3" cy="716.3" r="0.9"/><circle cx="1648.4" cy="677.9" r="0.9"/><circle cx="1648.4" cy="716.3" r="0.9"/><circle cx="1658.5" cy="677.9" r="0.9"/><circle cx="1658.5" cy="716.3" r="0.9"/><circle cx="1608" cy="690.7" r="0.9"/><circle cx="1658.5" cy="690.7" r="0.9"/><circle cx="1608" cy="703.5" r="0.9"/><circle cx="1658.5" cy="703.5" r="0.9"/></g></svg>
<span class="t" id="t0" style="left:43.60px;top:15.16px;font-size:14.4px;color:#fff;font-weight:700;transform:scaleX(1.1042);transform-origin:0 50%;text-shadow:0 0 2px #000">Profirst Jobvision V5.23.25.0 Machine:CYPCUT</span>
<span class="t" id="t1" style="left:12.90px;top:48.53px;font-size:11.6px;color:#333;transform:scaleX(0.9499);transform-origin:0 50%;">Te snijden</span>
<span class="t" id="t2" style="left:152.40px;top:48.53px;font-size:11.6px;color:#333;transform:scaleX(0.9930);transform-origin:0 50%;">Dagoverzicht</span>
<span class="t" id="t3" style="left:229.40px;top:48.53px;font-size:11.6px;color:#333;transform:scaleX(1.0162);transform-origin:0 50%;">Materiaaloverzicht</span>
<span class="t" id="t4" style="left:336.20px;top:48.53px;font-size:11.6px;color:#333;transform:scaleX(0.9840);transform-origin:0 50%;">Machine bezetting</span>
<span class="t" id="t5" style="left:455.90px;top:48.53px;font-size:11.6px;color:#333;transform:scaleX(0.9378);transform-origin:0 50%;">Opnieuw snijden</span>
<span class="t" id="t6" style="left:547.20px;top:48.53px;font-size:11.6px;color:#333;transform:scaleX(0.9922);transform-origin:0 50%;">Berichten</span>
<span class="t" id="t7" style="left:606.00px;top:48.53px;font-size:11.6px;color:#333;transform:scaleX(0.9849);transform-origin:0 50%;">Voltooiingsstatus</span>
<span class="t" id="t8" style="left:72.00px;top:47.53px;font-size:11.6px;color:#333;transform:scaleX(0.9310);transform-origin:0 50%;">Gescheidenis.</span>
<span class="t" id="t9" style="left:13.00px;top:75.53px;font-size:11.6px;color:#222;transform:scaleX(1.0151);transform-origin:0 50%;">Data laatst gebruikt</span>
<span class="t" id="t10" style="left:150.40px;top:76.78px;font-size:11.3px;color:#222;transform:scaleX(0.9717);transform-origin:0 50%;">Laatste 6 maanden</span>
<span class="t" id="t11" style="left:1743.30px;top:76.73px;font-size:9px;color:#223;transform:scaleX(1.0068);transform-origin:0 50%;">Restplaat Labels</span>
<span class="t" id="t12" style="left:1833.60px;top:75.73px;font-size:9px;color:#223;">Restplaat</span>
<span class="t" id="t13" style="left:430.84px;top:107.78px;font-size:11.3px;color:#2e2e2e;">Nesting</span>
<span class="t" id="t14" style="left:916.00px;top:107.78px;font-size:11.3px;color:#2e2e2e;transform:scaleX(1.0273);transform-origin:0 50%;">Start datum</span>
<span class="t" id="t15" style="left:1014.10px;top:99.78px;font-size:11.3px;color:#2e2e2e;transform:scaleX(0.9508);transform-origin:0 50%;">Machine</span>
<span class="t" id="t16" style="left:1027.17px;top:115.78px;font-size:11.3px;color:#2e2e2e;">tijd</span>
<span class="t" id="t17" style="left:1081.20px;top:107.78px;font-size:11.3px;color:#2e2e2e;">Geplande tijd</span>
<span class="t" id="t18" style="left:1155.20px;top:107.78px;font-size:11.3px;color:#2e2e2e;transform:scaleX(1.0545);transform-origin:0 50%;">Materiaal</span>
<span class="t" id="t19" style="left:1224.50px;top:107.78px;font-size:11.3px;color:#2e2e2e;transform:scaleX(1.0291);transform-origin:0 50%;">Materiaal typen</span>
<span class="t" id="t20" style="left:1333.62px;top:107.78px;font-size:11.3px;color:#2e2e2e;">Dikte</span>
<span class="t" id="t21" style="left:1383.00px;top:107.78px;font-size:11.3px;color:#2e2e2e;transform:scaleX(1.0072);transform-origin:0 50%;">Calibreren</span>
<span class="t" id="t22" style="left:1544.00px;top:107.78px;font-size:11.3px;color:#2e2e2e;transform:scaleX(0.9495);transform-origin:0 50%;">Commentaar</span>
<span class="t" id="t23" style="left:1723.40px;top:107.78px;font-size:11.3px;color:#2e2e2e;transform:scaleX(0.9837);transform-origin:0 50%;">Gebruiker</span>
<span class="t" id="t24" style="left:1818.00px;top:99.78px;font-size:11.3px;color:#2e2e2e;">Gewicht</span>
<span class="t" id="t25" style="left:1810.50px;top:115.78px;font-size:11.3px;color:#2e2e2e;">onderdelen</span>
<span class="t" id="t26" style="left:426.00px;top:135.21px;font-size:10.8px;color:#2e2e2e;">00000870</span>
<span class="t" id="t27" style="left:893.30px;top:135.21px;font-size:10.8px;color:#2e2e2e;transform:scaleX(1.0719);transform-origin:0 50%;">30/08/2024 12:30:47</span>
<span class="t" id="t28" style="left:1029.70px;top:135.21px;font-size:10.8px;color:#2e2e2e;">11 s</span>
<span class="t" id="t29" style="left:1087.79px;top:135.21px;font-size:10.8px;color:#2e2e2e;">14 m 44 s</span>
<span class="t" id="t30" style="left:1169.20px;top:135.21px;font-size:10.8px;color:#2e2e2e;transform:scaleX(0.9671);transform-origin:0 50%;">Staal</span>
<span class="t" id="t31" style="left:1216.40px;top:135.21px;font-size:10.8px;color:#2e2e2e;transform:scaleX(0.8882);transform-origin:0 50%;">S235</span>
<span class="t" id="t32" style="left:1339.49px;top:135.21px;font-size:10.8px;color:#2e2e2e;">3,0</span>
<span class="t" id="t33" style="left:1459.70px;top:135.21px;font-size:10.8px;color:#2e2e2e;transform:scaleX(0.8796);transform-origin:0 50%;">100%</span>
<span class="t" id="t34" style="left:426.00px;top:153.21px;font-size:10.8px;color:#2e2e2e;">00000868</span>
<span class="t" id="t35" style="left:893.30px;top:153.21px;font-size:10.8px;color:#2e2e2e;transform:scaleX(1.0719);transform-origin:0 50%;">30/08/2024 09:36:04</span>
<span class="t" id="t36" style="left:1032.30px;top:153.21px;font-size:10.8px;color:#2e2e2e;">7 s</span>
<span class="t" id="t37" style="left:1090.80px;top:153.21px;font-size:10.8px;color:#2e2e2e;">2 m 51 s</span>
<span class="t" id="t38" style="left:1169.20px;top:153.21px;font-size:10.8px;color:#2e2e2e;transform:scaleX(0.9671);transform-origin:0 50%;">Staal</span>
<span class="t" id="t39" style="left:1216.40px;top:153.21px;font-size:10.8px;color:#2e2e2e;transform:scaleX(0.8874);transform-origin:0 50%;">DC01</span>
<span class="t" id="t40" style="left:1339.49px;top:153.21px;font-size:10.8px;color:#2e2e2e;">0,8</span>
<span class="t" id="t41" style="left:1459.70px;top:153.21px;font-size:10.8px;color:#2e2e2e;transform:scaleX(0.8796);transform-origin:0 50%;">100%</span>
<span class="t" id="t42" style="left:426.00px;top:171.21px;font-size:10.8px;color:#2e2e2e;">00000807</span>
<span class="t" id="t43" style="left:893.30px;top:171.21px;font-size:10.8px;color:#2e2e2e;transform:scaleX(1.0719);transform-origin:0 50%;">22/05/2024 13:37:45</span>
<span class="t" id="t44" style="left:1029.29px;top:171.21px;font-size:10.8px;color:#2e2e2e;">10 s</span>
<span class="t" id="t45" style="left:1087.79px;top:171.21px;font-size:10.8px;color:#2e2e2e;">56 m 14 s</span>
<span class="t" id="t46" style="left:1169.20px;top:171.21px;font-size:10.8px;color:#2e2e2e;transform:scaleX(0.9671);transform-origin:0 50%;">Staal</span>
<span class="t" id="t47" style="left:1216.40px;top:171.21px;font-size:10.8px;color:#2e2e2e;transform:scaleX(0.8882);transform-origin:0 50%;">S235</span>
<span class="t" id="t48" style="left:1339.49px;top:171.21px;font-size:10.8px;color:#2e2e2e;">5,0</span>
<span class="t" id="t49" style="left:1459.70px;top:171.21px;font-size:10.8px;color:#2e2e2e;transform:scaleX(0.8796);transform-origin:0 50%;">100%</span>
<span class="t" id="t50" style="left:46.45px;top:226.01px;font-size:13.4px;color:#2a2a2a;transform:scaleX(1.0317);transform-origin:0 50%;">Klant</span>
<span class="t" id="t51" style="left:118.60px;top:227.22px;font-size:9.6px;color:#24400c;transform:scaleX(1.0889);transform-origin:0 50%;-webkit-text-stroke:0.25px #24400c">ERPOrdernummer</span>
<span class="t" id="t52" style="left:230.25px;top:226.01px;font-size:13.4px;color:#2a2a2a;transform:scaleX(1.0664);transform-origin:0 50%;">Snijdatum</span>
<span class="t" id="t53" style="left:340.70px;top:226.01px;font-size:13.4px;color:#2a2a2a;transform:scaleX(0.9611);transform-origin:0 50%;">Revisie</span>
<span class="t" id="t54" style="left:423.30px;top:226.01px;font-size:13.4px;color:#2a2a2a;transform:scaleX(1.0219);transform-origin:0 50%;">Itemnummer</span>
<span class="t" id="t55" style="left:516.25px;top:219.63px;font-size:10.3px;color:#2a2a2a;transform:scaleX(1.1183);transform-origin:0 50%;">Vervolgbewerking</span>
<span class="t" id="t56" style="left:558.63px;top:234.63px;font-size:10.3px;color:#2a2a2a;">1</span>
<span class="t" id="t57" style="left:616.25px;top:219.63px;font-size:10.3px;color:#2a2a2a;transform:scaleX(1.1183);transform-origin:0 50%;">Vervolgbewerking</span>
<span class="t" id="t58" style="left:658.63px;top:234.63px;font-size:10.3px;color:#2a2a2a;">2</span>
<span class="t" id="t59" style="left:737.00px;top:226.01px;font-size:13.4px;color:#2a2a2a;transform:scaleX(1.0616);transform-origin:0 50%;">Product</span>
<span class="t" id="t60" style="left:829.00px;top:226.01px;font-size:13.4px;color:#2a2a2a;transform:scaleX(1.0680);transform-origin:0 50%;">Plan client</span>
<span class="t" id="t61" style="left:914.95px;top:227.38px;font-size:10.6px;color:#2a2a2a;transform:scaleX(1.1503);transform-origin:0 50%;">Destination pièce</span>
<span class="t" id="t62" style="left:77.35px;top:295.14px;font-size:15.6px;color:#2a2a00;font-weight:700;transform:scaleX(0.9542);transform-origin:0 50%;">Alle</span>
<span class="t" id="t63" style="left:218.50px;top:295.48px;font-size:15.2px;color:#3c1420;font-weight:700;transform:scaleX(1.0506);transform-origin:0 50%;">20224578</span>
<span class="t" id="t64" style="left:380.50px;top:295.48px;font-size:15.2px;color:#22223c;font-weight:700;transform:scaleX(1.0506);transform-origin:0 50%;">20221246</span>
<span class="t" id="t65" style="left:542.00px;top:295.48px;font-size:15.2px;color:#2c2828;font-weight:700;transform:scaleX(1.0506);transform-origin:0 50%;">20231218</span>
<span class="t" id="t66" style="left:699.50px;top:295.48px;font-size:15.2px;color:#2a302c;font-weight:700;transform:scaleX(1.0522);transform-origin:0 50%;">202401234</span>
<span class="t" id="t67" style="left:1619.00px;top:262.78px;font-size:11.3px;color:#2e2e2e;transform:scaleX(0.9605);transform-origin:0 50%;">Restplaat naam</span>
<span class="t" id="t68" style="left:1778.70px;top:262.78px;font-size:11.3px;color:#2e2e2e;transform:scaleX(1.0154);transform-origin:0 50%;">Locatie</span>
<span class="t" id="t69" style="left:1606.00px;top:284.21px;font-size:10.8px;color:#2e2e2e;">88123585.001</span>
<span class="t" id="t70" style="left:1606.00px;top:302.21px;font-size:10.8px;color:#2e2e2e;">88123585.002</span>
<span class="t" id="t71" style="left:1532.70px;top:361.78px;font-size:11.3px;color:#2e2e2e;transform:scaleX(0.9673);transform-origin:0 50%;">Aantal</span>
<span class="t" id="t72" style="left:1522.45px;top:377.78px;font-size:11.3px;color:#2e2e2e;transform:scaleX(1.0249);transform-origin:0 50%;">producten</span>
<span class="t" id="t73" style="left:1520.45px;top:393.78px;font-size:11.3px;color:#2e2e2e;transform:scaleX(1.0154);transform-origin:0 50%;">opnieuw te</span>
<span class="t" id="t74" style="left:1530.45px;top:409.78px;font-size:11.3px;color:#2e2e2e;transform:scaleX(0.9913);transform-origin:0 50%;">snijden</span>
<span class="t" id="t75" style="left:1609.20px;top:385.78px;font-size:11.3px;color:#2e2e2e;transform:scaleX(0.9589);transform-origin:0 50%;">Voorbeeld</span>
<span class="t" id="t76" style="left:1689.85px;top:393.78px;font-size:11.3px;color:#2e2e2e;transform:scaleX(0.9913);transform-origin:0 50%;">snijden</span>
<span class="t" id="t77" style="left:1754.35px;top:393.78px;font-size:11.3px;color:#2e2e2e;">in plaat</span>
<span class="t" id="t78" style="left:1508.20px;top:452.21px;font-size:10.8px;color:#2e2e2e;transform:scaleX(0.9639);transform-origin:0 50%;">KUB RG158-211...</span>
<span class="t" id="t79" style="left:1720.00px;top:452.21px;font-size:10.8px;color:#2e2e2e;transform:scaleX(1.0468);transform-origin:0 50%;">0,00</span>
<span class="t" id="t80" style="left:1777.97px;top:452.21px;font-size:10.8px;color:#2e2e2e;">12,00</span>
<span class="t" id="t81" style="left:1811.20px;top:452.21px;font-size:10.8px;color:#2e2e2e;">20221246</span>
<span class="t" id="t82" style="left:1508.20px;top:512.21px;font-size:10.8px;color:#2e2e2e;">5077227-1a</span>
<span class="t" id="t83" style="left:1720.00px;top:512.21px;font-size:10.8px;color:#2e2e2e;transform:scaleX(1.0468);transform-origin:0 50%;">0,00</span>
<span class="t" id="t84" style="left:1777.97px;top:512.21px;font-size:10.8px;color:#2e2e2e;">84,00</span>
<span class="t" id="t85" style="left:1811.20px;top:512.21px;font-size:10.8px;color:#2e2e2e;">20224578</span>
<span class="t" id="t86" style="left:1508.20px;top:572.21px;font-size:10.8px;color:#2e2e2e;transform:scaleX(0.9751);transform-origin:0 50%;">1281057</span>
<span class="t" id="t87" style="left:1720.00px;top:572.21px;font-size:10.8px;color:#2e2e2e;transform:scaleX(1.0468);transform-origin:0 50%;">0,00</span>
<span class="t" id="t88" style="left:1777.97px;top:572.21px;font-size:10.8px;color:#2e2e2e;">12,00</span>
<span class="t" id="t89" style="left:1811.20px;top:572.21px;font-size:10.8px;color:#2e2e2e;">20231218</span>
<span class="t" id="t90" style="left:1508.20px;top:632.21px;font-size:10.8px;color:#2e2e2e;transform:scaleX(0.9241);transform-origin:0 50%;">Salomon-01</span>
<span class="t" id="t91" style="left:1720.00px;top:632.21px;font-size:10.8px;color:#2e2e2e;transform:scaleX(1.0468);transform-origin:0 50%;">0,00</span>
<span class="t" id="t92" style="left:1783.98px;top:632.21px;font-size:10.8px;color:#2e2e2e;">1,00</span>
<span class="t" id="t93" style="left:1811.20px;top:632.21px;font-size:10.8px;color:#2e2e2e;">20231218</span>
<span class="t" id="t94" style="left:1508.20px;top:692.21px;font-size:10.8px;color:#2e2e2e;transform:scaleX(1.0184);transform-origin:0 50%;">Verhoef-01</span>
<span class="t" id="t95" style="left:1720.00px;top:692.21px;font-size:10.8px;color:#2e2e2e;transform:scaleX(1.0468);transform-origin:0 50%;">0,00</span>
<span class="t" id="t96" style="left:1783.98px;top:692.21px;font-size:10.8px;color:#2e2e2e;">5,00</span>
<span class="t" id="t97" style="left:1811.20px;top:692.21px;font-size:10.8px;color:#2e2e2e;">202401234</span>
</body></html>
